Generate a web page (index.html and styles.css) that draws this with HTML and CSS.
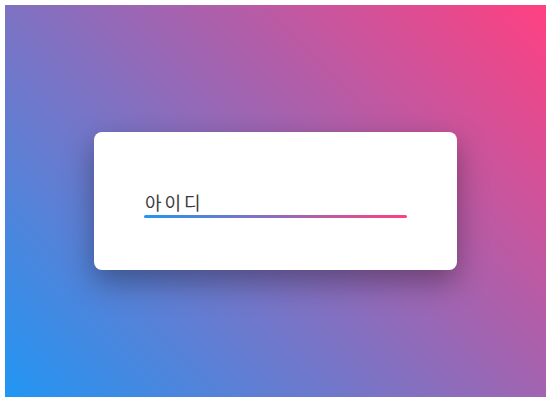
FILE: index.html
```html
<!DOCTYPE html>
<html lang="ko">
<head>
<meta charset="utf-8">
<link rel="stylesheet" href="styles.css">
</head>
<body>
<div class="stage">
  <div class="card">
    <div class="field">
      <span class="label">아이디</span>
      <div class="line"></div>
    </div>
  </div>
</div>
</body>
</html>
```
FILE: styles.css
```css
html, body { margin: 0; padding: 0; background: #fff; }
body { padding: 5px; }
.stage {
  width: 541px;
  height: 392px;
  background: linear-gradient(45deg, #2196f3, #ff4081);
  display: flex;
  align-items: center;
  justify-content: center;
}
.card {
  width: 363px;
  height: 138px;
  box-sizing: border-box;
  background: #fff;
  border-radius: 8px;
  box-shadow: 0 12px 30px rgba(0, 0, 0, 0.35);
  padding: 0 50px;
  display: flex;
  flex-direction: column;
  justify-content: center;
}
.field {
  display: flex;
  flex-direction: column;
  margin-top: 6px;
}
.label {
  font-family: "Noto Sans CJK KR", "Noto Sans", sans-serif;
  font-size: 18px;
  line-height: 24px;
  letter-spacing: 3px;
  color: #3a3a3a;
  padding-left: 1px;
}
.line {
  height: 3px;
  margin-top: 1px;
  border-radius: 2px;
  background: linear-gradient(90deg, #2196f3, #ff4081);
}
```
